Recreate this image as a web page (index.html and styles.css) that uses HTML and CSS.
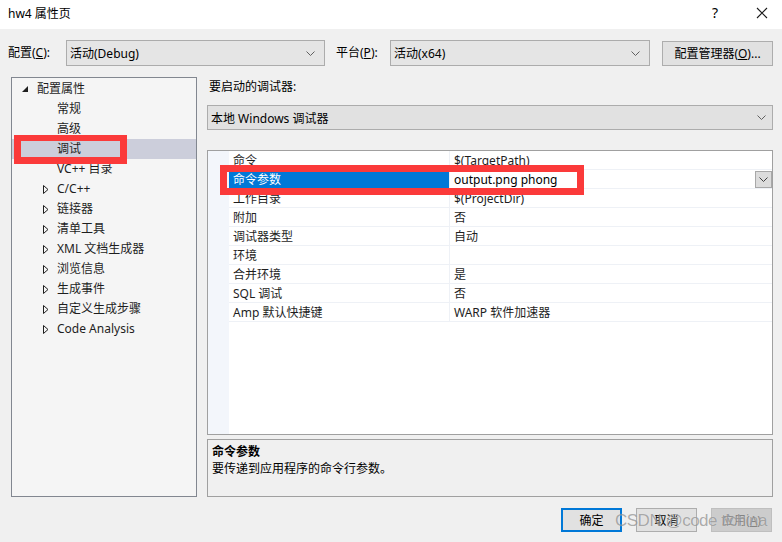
FILE: index.html
```html
<!DOCTYPE html>
<html>
<head>
<meta charset="utf-8">
<title>hw4 属性页</title>
<link rel="stylesheet" href="styles.css">
</head>
<body>
<div class="window">
  <div class="titlebar">
    <span class="title">hw4 属性页</span>
    <span class="tb-help">?</span>
    <svg class="tb-close" width="12" height="12" viewBox="0 0 12 12"><path d="M1 1 L11 11 M11 1 L1 11" stroke="#1a1a1a" stroke-width="1.1" fill="none"/></svg>
  </div>
  <div class="main">
    <div class="toprow">
      <span class="lbl lbl-config">配置(<u>C</u>):</span>
      <div class="combo combo-config"><span>活动(Debug)</span><svg class="chev" width="9" height="5" viewBox="0 0 9 5"><path d="M0.5 0.5 L4.5 4.5 L8.5 0.5" stroke="#606060" fill="none"/></svg></div>
      <span class="lbl lbl-platform">平台(<u>P</u>):</span>
      <div class="combo combo-platform"><span>活动(x64)</span><svg class="chev" width="9" height="5" viewBox="0 0 9 5"><path d="M0.5 0.5 L4.5 4.5 L8.5 0.5" stroke="#606060" fill="none"/></svg></div>
      <div class="btn btn-mgr">配置管理器(<u>O</u>)...</div>
    </div>
    <div class="content">
      <div class="tree">
        <div class="trow lvl0"><span class="twisty"><svg width="6" height="6" viewBox="0 0 6 6"><polygon points="6,0 6,6 0,6" fill="#1e1e1e"/></svg></span><span>配置属性</span></div>
        <div class="trow lvl1"><span class="twisty"></span><span>常规</span></div>
        <div class="trow lvl1"><span class="twisty"></span><span>高级</span></div>
        <div class="trow lvl1 sel"><span class="twisty"></span><span>调试</span></div>
        <div class="trow lvl1"><span class="twisty"></span><span>VC++ 目录</span></div>
        <div class="trow lvl1"><span class="twisty"><svg width="6" height="9" viewBox="0 0 6 9"><polygon points="0.5,0.5 5,4.5 0.5,8.5" fill="none" stroke="#1e1e1e"/></svg></span><span>C/C++</span></div>
        <div class="trow lvl1"><span class="twisty"><svg width="6" height="9" viewBox="0 0 6 9"><polygon points="0.5,0.5 5,4.5 0.5,8.5" fill="none" stroke="#1e1e1e"/></svg></span><span>链接器</span></div>
        <div class="trow lvl1"><span class="twisty"><svg width="6" height="9" viewBox="0 0 6 9"><polygon points="0.5,0.5 5,4.5 0.5,8.5" fill="none" stroke="#1e1e1e"/></svg></span><span>清单工具</span></div>
        <div class="trow lvl1"><span class="twisty"><svg width="6" height="9" viewBox="0 0 6 9"><polygon points="0.5,0.5 5,4.5 0.5,8.5" fill="none" stroke="#1e1e1e"/></svg></span><span>XML 文档生成器</span></div>
        <div class="trow lvl1"><span class="twisty"><svg width="6" height="9" viewBox="0 0 6 9"><polygon points="0.5,0.5 5,4.5 0.5,8.5" fill="none" stroke="#1e1e1e"/></svg></span><span>浏览信息</span></div>
        <div class="trow lvl1"><span class="twisty"><svg width="6" height="9" viewBox="0 0 6 9"><polygon points="0.5,0.5 5,4.5 0.5,8.5" fill="none" stroke="#1e1e1e"/></svg></span><span>生成事件</span></div>
        <div class="trow lvl1"><span class="twisty"><svg width="6" height="9" viewBox="0 0 6 9"><polygon points="0.5,0.5 5,4.5 0.5,8.5" fill="none" stroke="#1e1e1e"/></svg></span><span>自定义生成步骤</span></div>
        <div class="trow lvl1"><span class="twisty"><svg width="6" height="9" viewBox="0 0 6 9"><polygon points="0.5,0.5 5,4.5 0.5,8.5" fill="none" stroke="#1e1e1e"/></svg></span><span>Code Analysis</span></div>
        <div class="mark mark-tree"></div>
      </div>
      <div class="right">
        <div class="rlabel">要启动的调试器:</div>
        <div class="combo combo-debugger"><span>本地 Windows 调试器</span><svg class="chev" width="9" height="5" viewBox="0 0 9 5"><path d="M0.5 0.5 L4.5 4.5 L8.5 0.5" stroke="#606060" fill="none"/></svg></div>
        <div class="pgrid">
          <div class="prow"><span class="pm"></span><span class="pn">命令</span><span class="pv">$(TargetPath)</span></div>
          <div class="prow psel"><span class="pm"></span><span class="pn">命令参数</span><span class="pv">output.png phong<span class="pdrop"><svg width="9" height="5" viewBox="0 0 9 5"><path d="M0.5 0.5 L4.5 4.5 L8.5 0.5" stroke="#404040" fill="none"/></svg></span></span></div>
          <div class="prow"><span class="pm"></span><span class="pn">工作目录</span><span class="pv">$(ProjectDir)</span></div>
          <div class="prow"><span class="pm"></span><span class="pn">附加</span><span class="pv">否</span></div>
          <div class="prow"><span class="pm"></span><span class="pn">调试器类型</span><span class="pv">自动</span></div>
          <div class="prow"><span class="pm"></span><span class="pn">环境</span><span class="pv"></span></div>
          <div class="prow"><span class="pm"></span><span class="pn">合并环境</span><span class="pv">是</span></div>
          <div class="prow"><span class="pm"></span><span class="pn">SQL 调试</span><span class="pv">否</span></div>
          <div class="prow"><span class="pm"></span><span class="pn">Amp 默认快捷键</span><span class="pv">WARP 软件加速器</span></div>
          <div class="pfill"><span class="pm"></span></div>
          <div class="mark mark-grid"></div>
        </div>
        <div class="desc">
          <div class="desc-title">命令参数</div>
          <div class="desc-text">要传递到应用程序的命令行参数。</div>
        </div>
      </div>
    </div>
    <div class="buttons">
      <div class="btn btn-ok">确定</div>
      <div class="btn">取消</div>
      <div class="btn btn-disabled">应用(<u>A</u>)</div>
    </div>
  </div>
  <div class="watermark">CSDN @code tlchina</div>
</div>
</body>
</html>
```

FILE: styles.css
```css
* { box-sizing: border-box; }
html, body { margin: 0; padding: 0; }
body {
  width: 782px;
  height: 542px;
  overflow: hidden;
  font-family: "Noto Sans", "Noto Sans CJK SC", sans-serif;
  font-size: 12px;
  color: #000;
  background: #f0f0f0;
}
.window {
  position: relative;
  width: 782px;
  height: 542px;
  display: flex;
  flex-direction: column;
}
.titlebar {
  height: 29px;
  background: #fff;
  display: flex;
  align-items: center;
  padding-left: 8px;
  line-height: 16px;
}
.title { flex: 1; margin-top: -1px; }
.tb-help { font-size: 14px; margin-right: 38px; margin-top: -3px; }
.tb-close { margin-right: 14px; margin-top: -3px; }

.main { flex: 1; display: flex; flex-direction: column; }

.toprow {
  margin-top: 11px;
  height: 26px;
  display: flex;
  align-items: center;
  padding-left: 8px;
}
.lbl { line-height: 16px; }
.lbl-config { width: 58px; }
.lbl-platform { width: 54px; margin-left: 11px; }
.combo {
  height: 26px;
  background: #e5e5e5;
  border: 1px solid #acacac;
  display: flex;
  align-items: center;
  padding-left: 3px;
  padding-right: 9px;
}
.combo span { flex: 1; }
.combo-config { width: 259px; }
.combo-platform { width: 260px; }
.btn {
  height: 25px;
  background: #e1e1e1;
  border: 1px solid #adadad;
  display: flex;
  align-items: center;
  justify-content: center;
}
.btn-mgr { width: 111px; margin-left: 12px; }

.content {
  margin-top: 11px;
  height: 420px;
  display: flex;
  padding-left: 11px;
}
.tree {
  position: relative;
  width: 186px;
  height: 420px;
  background: #f5f5f5;
  border: 1px solid #828790;
  padding-top: 1px;
}
.trow {
  height: 20px;
  display: flex;
  align-items: center;
  line-height: 16px;
  color: #1e1e1e;
}
.trow.lvl0 { padding-left: 8px; }
.trow.lvl1 { padding-left: 28px; }
.twisty {
  width: 17px;
  height: 20px;
  display: flex;
  align-items: center;
}
.lvl0 .twisty { width: 17px; padding-left: 2px; padding-bottom: 1px; }
.lvl1 .twisty { padding-left: 3px; }
.trow.sel { background: #cccedb; }

.mark { position: absolute; border: 6px solid #fb3a3a; border-left-width: 7px; border-right-width: 7px; border-bottom-width: 7px; }
.mark-tree { left: 2px; top: 57px; width: 113px; height: 29px; }

.right {
  margin-left: 10px;
  width: 566px;
  display: flex;
  flex-direction: column;
}
.rlabel { height: 20px; line-height: 20px; padding-left: 2px; }
.combo-debugger { margin-top: 8px; height: 25px; width: 566px; background: #e1e1e1; padding-left: 3px; padding-right: 6px; }

.pgrid {
  position: relative;
  margin-top: 20px;
  height: 285px;
  background: #fff;
  border: 1px solid #a0a0a0;
  display: flex;
  flex-direction: column;
}
.prow {
  height: 19px;
  display: flex;
  flex: none;
  line-height: 16px;
}
.pm { width: 21px; flex: none; background: #f3f6fb; }
.pn {
  width: 221px;
  flex: none;
  padding-left: 4px;
  padding-top: 2px;
  display: flex;
  align-items: center;
  border-bottom: 1px solid #eef1f6;
  border-right: 1px solid #eef1f6;
  color: #1e1e1e;
}
.pv {
  flex: 1;
  position: relative;
  padding-left: 4px;
  padding-top: 2px;
  display: flex;
  align-items: center;
  border-bottom: 1px solid #eef1f6;
  color: #1e1e1e;
}
.psel .pn { background: #0078d7; color: #fff; border-top: 2px solid #fff; padding-top: 0; }
.psel .pv { color: #000; }
.pdrop {
  position: absolute;
  right: 0;
  top: 1px;
  width: 17px;
  height: 17px;
  background: #dcdcdc;
  border: 1px solid #a8a8a8;
  display: flex;
  align-items: center;
  justify-content: center;
}
.pfill { flex: 1; display: flex; }
.mark-grid { left: 12px; top: 14px; width: 364px; height: 30px; border-width: 7px; }

.desc {
  margin-top: 4px;
  height: 58px;
  border: 1px solid #a0a0a0;
  background: #f0f0f0;
  padding: 3px 0 0 4px;
  line-height: 17px;
}
.desc-title { font-weight: bold; }

.buttons {
  margin-top: 11px;
  height: 24px;
  display: flex;
  justify-content: flex-end;
  gap: 14px;
  padding-right: 10px;
}
.buttons .btn { width: 61px; height: 24px; }
.btn-ok { border: 2px solid #0078d7; }
.btn-disabled { background: #cccccc; border-color: #bfbfbf; color: #838383; }

.watermark {
  position: absolute;
  left: 615px;
  top: 511px;
  font-family: "Liberation Sans", sans-serif;
  font-size: 17px;
  color: rgba(105, 105, 105, 0.55);
  letter-spacing: -0.5px;
  white-space: nowrap;
  text-shadow: 0 0 1px rgba(255,255,255,0.6);
}
```
